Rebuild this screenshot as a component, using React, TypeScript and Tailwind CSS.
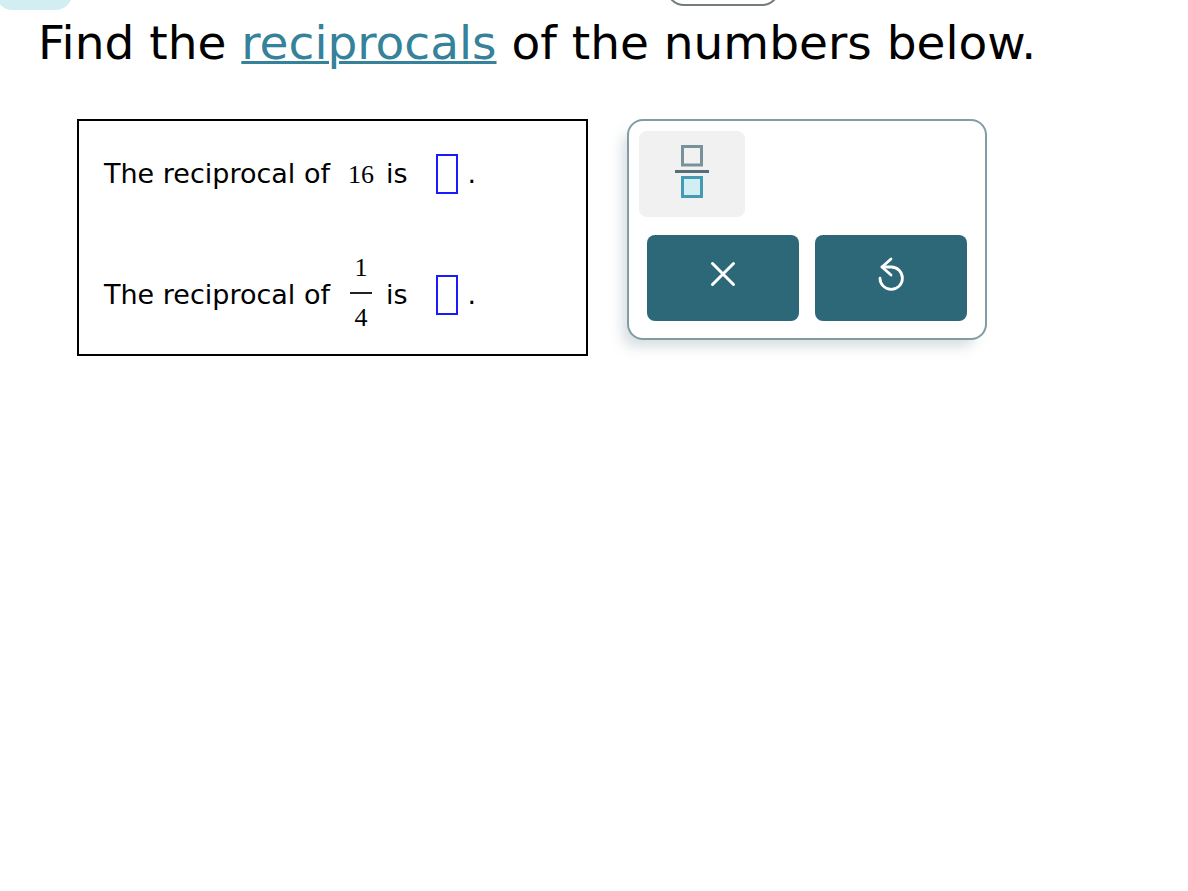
import { useState } from "react";

function FractionIcon() {
  return (
    <svg width="34" height="54" viewBox="0 0 34 54" fill="none" aria-hidden="true">
      <rect x="7.5" y="1.5" width="19" height="18.5" stroke="#78929c" strokeWidth="3" />
      <rect x="0" y="25" width="34" height="3" fill="#546e7a" />
      <rect x="7.5" y="32.5" width="19" height="19" fill="#d2eef3" stroke="#429ab5" strokeWidth="3" />
    </svg>
  );
}

function ClearIcon() {
  return (
    <svg width="26" height="26" viewBox="0 0 26 26" fill="none" stroke="white" strokeWidth="3" strokeLinecap="round" aria-hidden="true">
      <path d="M2.5 2.5l21 21M23.5 2.5l-21 21" />
    </svg>
  );
}

function UndoIcon() {
  return (
    <svg width="26" height="34" viewBox="0 0 26 34" fill="none" stroke="white" strokeWidth="2.8" strokeLinecap="round" strokeLinejoin="round" aria-hidden="true">
      <path d="M13 2L4 10l9 8" />
      <path d="M4 10h9.200A11.200 11.200 0 1 1 2 21.200" />
    </svg>
  );
}

function Answer({ id }: { id: string }) {
  const [value, setValue] = useState("");
  return (
    <div className="ml-7 flex items-center gap-[10px]">
      <input
        id={id}
        type="text"
        value={value}
        onChange={(e) => setValue(e.target.value)}
        className="h-10 w-[22px] border-2 border-[#1a1aff] bg-white text-center font-['Liberation_Serif',serif] text-2xl outline-none"
      />
      <span>.</span>
    </div>
  );
}

export default function App() {
  return (
    <div className="min-h-screen bg-white font-['DejaVu_Sans',sans-serif] text-black">
      <header className="flex h-[10px] items-end overflow-hidden">
        <div className="-ml-1 h-10 w-[76px] shrink-0 rounded-2xl bg-[#d3eef3]" />
        <div className="mb-1 ml-[50%] h-10 w-[114px] shrink-0 rounded-[18px] border-2 border-[#757c7e]" />
      </header>

      <main className="px-[38px]">
        <h1 className="mt-1 text-[47px] leading-[58px]">
          Find the{" "}
          <a href="#reciprocals" className="text-[#35829a] underline decoration-[3px] underline-offset-2">
            reciprocals
          </a>{" "}
          of the numbers below.
        </h1>

        <div className="mt-[47px] flex flex-wrap items-start gap-[39px] pl-[39px]">
          <section className="w-full max-w-[511px] border-2 border-black px-[25px] pt-[31px] pb-5 text-[27px] leading-10">
            <div className="flex items-center">
              <label htmlFor="answer-16" className="flex items-baseline pt-[2px]">
                The reciprocal of
                <span className="mr-3 ml-[18px] font-['Liberation_Serif',serif] text-[26px]">16</span>
                is
              </label>
              <Answer id="answer-16" />
            </div>
            <div className="mt-[61px] flex items-center">
              <label htmlFor="answer-quarter" className="flex items-center">
                <span>The reciprocal of</span>
                <span className="mr-[14px] ml-5 flex w-[22px] flex-col items-center pb-1 font-['Liberation_Serif',serif] text-[26px] leading-6">
                  <span>1</span>
                  <span className="my-3 h-[2px] w-full bg-[#222]" />
                  <span>4</span>
                </span>
                <span>is</span>
              </label>
              <Answer id="answer-quarter" />
            </div>
          </section>

          <section className="w-full max-w-[360px] rounded-2xl border-2 border-[#819ca5] bg-white px-[10px] pt-[10px] pb-[17px] shadow-[-8px_10px_14px_-4px_rgba(84,110,122,0.25)]">
            <button type="button" aria-label="Fraction" className="flex h-[86px] w-[106px] items-start justify-center rounded-lg bg-[#f1f1f1] pt-[14px]">
              <FractionIcon />
            </button>
            <div className="mt-[18px] grid grid-cols-2 gap-4 px-2">
              <button type="button" aria-label="Clear" className="flex h-[86px] items-center justify-center rounded-lg bg-[#2d6879] pb-2">
                <ClearIcon />
              </button>
              <button type="button" aria-label="Undo" className="flex h-[86px] items-center justify-center rounded-lg bg-[#2d6879] pb-2">
                <UndoIcon />
              </button>
            </div>
          </section>
        </div>
      </main>
    </div>
  );
}
